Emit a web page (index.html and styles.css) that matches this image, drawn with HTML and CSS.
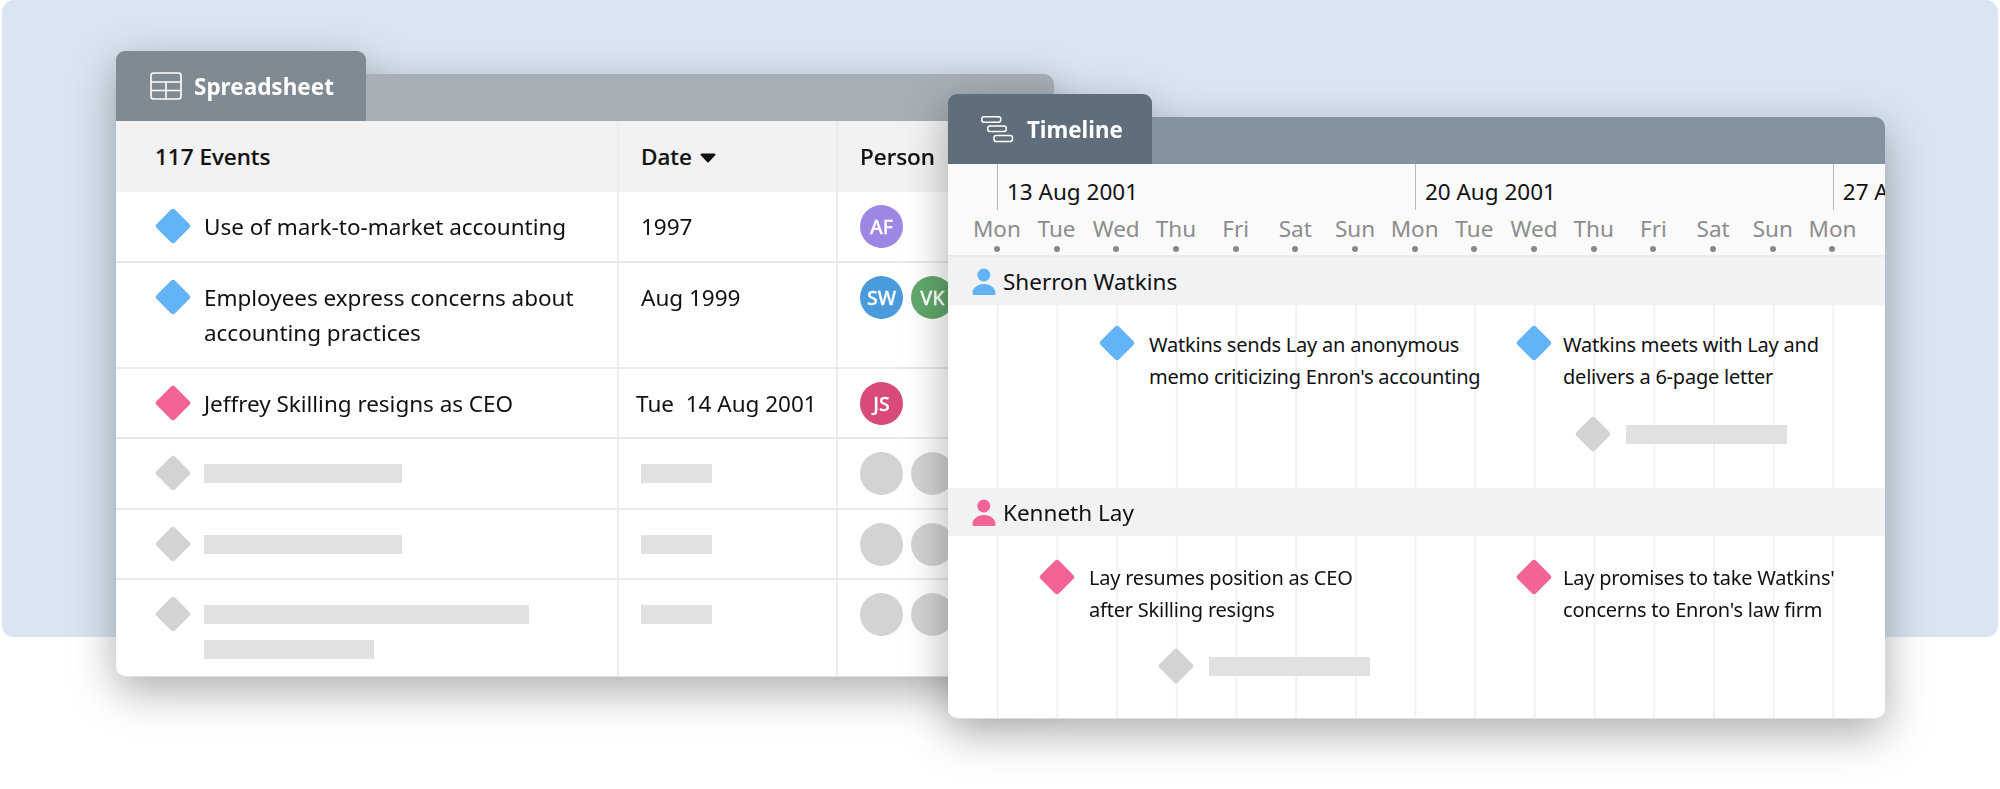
FILE: index.html
```html
<!DOCTYPE html>
<html lang="en">
<head>
<meta charset="utf-8">
<title>Spreadsheet and Timeline</title>
<link rel="stylesheet" href="styles.css">
</head>
<body>
<main class="stage">
  <div class="backdrop"></div>

  <section class="window sheet">
    <header class="titlebar sheet-bar">
      <div class="tab sheet-tab">
        <svg class="tab-icon" width="32" height="28" viewBox="0 0 32 28" fill="none" stroke="#fff" stroke-width="1.6"><rect x="1" y="1" width="30" height="26" rx="2.5"/><path d="M1 10h30M1 18.500h30M16 10v17"/></svg>
        <span>Spreadsheet</span>
      </div>
    </header>
    <div class="table">
      <div class="cell head first">117 Events</div>
      <div class="cell head">Date <svg class="caret" width="16" height="10" viewBox="0 0 16 10"><path d="M1.500 0.500h13a1 1 0 0 1 .7 1.700l-6.500 7a1 1 0 0 1-1.400 0l-6.500-7a1 1 0 0 1 .7-1.700z" fill="#111"/></svg></div>
      <div class="cell head person-head">Person</div>

      <div class="cell first"><i class="diamond blue"></i><span class="label">Use of mark-to-market accounting</span></div>
      <div class="cell">1997</div>
      <div class="cell people"><b class="avatar purple">AF</b></div>

      <div class="cell first"><i class="diamond blue"></i><span class="label">Employees express concerns about accounting practices</span></div>
      <div class="cell">Aug 1999</div>
      <div class="cell people"><b class="avatar azure">SW</b><b class="avatar green">VK</b></div>

      <div class="cell first"><i class="diamond pink"></i><span class="label">Jeffrey Skilling resigns as CEO</span></div>
      <div class="cell date-long">Tue&nbsp; 14 Aug 2001</div>
      <div class="cell people"><b class="avatar rose">JS</b></div>

      <div class="cell first"><i class="diamond grey"></i><div class="ghosts"><i class="ghost w198"></i></div></div>
      <div class="cell"><i class="ghost w71"></i></div>
      <div class="cell people"><b class="avatar blank"></b><b class="avatar blank"></b></div>

      <div class="cell first"><i class="diamond grey"></i><div class="ghosts"><i class="ghost w198"></i></div></div>
      <div class="cell"><i class="ghost w71"></i></div>
      <div class="cell people"><b class="avatar blank"></b><b class="avatar blank"></b></div>

      <div class="cell first tall"><i class="diamond grey"></i><div class="ghosts"><i class="ghost w325"></i><i class="ghost w170"></i></div></div>
      <div class="cell tall"><i class="ghost w71"></i></div>
      <div class="cell people tall"><b class="avatar blank"></b><b class="avatar blank"></b></div>
    </div>
  </section>

  <section class="window timeline">
    <header class="titlebar time-bar">
      <div class="tab time-tab">
        <svg class="tab-icon" width="33" height="28" viewBox="0 0 33 28" fill="none" stroke="#fff" stroke-width="1.5"><rect x="0.750" y="1.750" width="19" height="5.500" rx="2.200"/><rect x="6.750" y="11" width="18.500" height="5.500" rx="2.200"/><rect x="13" y="20.500" width="18.500" height="6" rx="2.200"/></svg>
        <span>Timeline</span>
      </div>
    </header>
    <div class="scale">
      <div class="weeks">
        <div class="week">13 Aug 2001</div>
        <div class="week">20 Aug 2001</div>
        <div class="week">27 Aug 2001</div>
      </div>
      <div class="days">
        <span class="day">Mon</span><span class="day">Tue</span><span class="day">Wed</span><span class="day">Thu</span><span class="day">Fri</span><span class="day">Sat</span><span class="day">Sun</span><span class="day">Mon</span><span class="day">Tue</span><span class="day">Wed</span><span class="day">Thu</span><span class="day">Fri</span><span class="day">Sat</span><span class="day">Sun</span><span class="day">Mon</span>
      </div>
    </div>

    <div class="lane-head">
      <svg class="person" width="24" height="28" viewBox="0 0 24 28"><circle cx="11.800" cy="8" r="6.500" fill="#62b4f7"/><path d="M.500 26C.500 21 5.500 17 12 17s11.500 4 11.500 9v.500a1.500 1.500 0 0 1-1.500 1.500H2a1.500 1.500 0 0 1-1.500-1.500z" fill="#62b4f7"/></svg>
      <span>Sherron Watkins</span>
    </div>
    <div class="lane lane-one">
      <div class="event e1"><i class="diamond blue"></i><p>Watkins sends Lay an anonymous<br>memo criticizing Enron's accounting</p></div>
      <div class="event e2"><i class="diamond blue"></i><p>Watkins meets with Lay and<br>delivers a 6-page letter</p></div>
      <div class="event e3"><i class="diamond grey"></i><i class="ghost w161"></i></div>
    </div>

    <div class="lane-head">
      <svg class="person" width="24" height="28" viewBox="0 0 24 28"><circle cx="11.800" cy="8" r="6.500" fill="#f46396"/><path d="M.500 26C.500 21 5.500 17 12 17s11.500 4 11.500 9v.500a1.500 1.500 0 0 1-1.500 1.500H2a1.500 1.500 0 0 1-1.500-1.500z" fill="#f46396"/></svg>
      <span>Kenneth Lay</span>
    </div>
    <div class="lane lane-two">
      <div class="event e4"><i class="diamond pink"></i><p>Lay resumes position as CEO<br>after Skilling resigns</p></div>
      <div class="event e5"><i class="diamond pink"></i><p>Lay promises to take Watkins'<br>concerns to Enron's law firm</p></div>
      <div class="event e6"><i class="diamond grey"></i><i class="ghost w161"></i></div>
    </div>
  </section>
</main>
</body>
</html>
```
FILE: styles.css
```css
* { box-sizing: border-box; }
html, body { margin: 0; padding: 0; background: #fff; }
body { font-family: "Noto Sans", "Open Sans", sans-serif; color: #111; overflow: hidden; }
i, b { display: block; font-style: normal; }

.stage { position: relative; width: 2000px; height: 789px; overflow: hidden; }
.backdrop { height: 637px; margin: 0 2px; background: #d9e5f1; border-radius: 12px; }

.window { position: absolute; filter: drop-shadow(0 14px 22px rgba(0, 0, 0, .32)); }
.sheet { left: 116px; top: 51px; width: 938px; }
.timeline { left: 948px; top: 94px; width: 937px; }

.titlebar { height: 70px; display: flex; align-items: flex-end; position: relative; }
.titlebar::before { content: ""; position: absolute; left: 0; right: 0; bottom: 0; height: 47px; border-radius: 0 10px 0 0; }
.sheet-bar::before { background: #a6aeb6; }
.time-bar::before { background: #84939f; }
.tab { position: relative; height: 70px; border-radius: 9px 9px 0 0; display: flex; align-items: center; color: #fff; font-size: 22.500px; font-weight: 700; }
.sheet-tab { width: 250px; background: #7f8a93; padding-left: 34px; gap: 12px; }
.time-tab { width: 204px; background: #5f6e7a; padding-left: 33px; gap: 13px; font-size: 22.300px; }
.tab-icon { flex: none; }

.table { display: grid; grid-template-columns: 503px 219px 216px; grid-template-rows: 71px 71px 106px 70px 71px 70px 96px; background: #fff; border-bottom: 1px solid #e0e0e0; border-radius: 0 0 10px 10px; overflow: hidden; font-size: 22.500px; }
.cell { border-right: 2px solid #ededed; border-bottom: 2px solid #e9e9e9; padding: 17px 0 0 22px; line-height: 35px; white-space: nowrap; }
.cell:nth-child(3n) { border-right: 0; padding-left: 22px; }
.cell.first { padding-left: 39px; display: flex; gap: 13px; align-items: flex-start; }
.cell.tall { border-bottom: 0; }
.head { background: #f2f2f2; font-weight: 500; -webkit-text-stroke: .2px #111; border-bottom: 0; display: flex; align-items: center; gap: 8px; padding-top: 0 !important; }
.cell.head.first { align-items: center; }
.date-long { padding-left: 17px; }
.label { white-space: normal; width: 400px; letter-spacing: -.03px; }
.caret { flex: none; margin-top: 3px; }

.diamond { flex: none; width: 26px; height: 26px; border-radius: 3px; transform: rotate(45deg); margin: 4px 5px; }
.blue { background: #62b4f7; }
.pink { background: #f46396; }
.grey { background: #d3d3d3; }

.people { display: flex; gap: 8px; padding-top: 13px; }
.avatar { width: 43px; height: 43px; flex: none; border-radius: 50%; color: #fff; font-size: 19.500px; font-weight: 500; -webkit-text-stroke: .3px #fff; line-height: 43px; text-align: center; }
.purple { background: #9e86e4; }
.azure { background: #4a9bdc; }
.green { background: #62a86b; }
.rose { background: #d84a78; }
.blank { background: #d3d3d3; }

.ghosts { display: flex; flex-direction: column; gap: 16px; padding-top: 8px; }
.cell > .ghost { margin-top: 8px; }
.ghost { height: 19px; background: #e1e1e2; }
.w198 { width: 198px; }
.w71 { width: 71px; }
.w325 { width: 325px; }
.w170 { width: 170px; }
.w161 { width: 161px; }

.scale { height: 93px; background: #fafafa; border-bottom: 2px solid #ebebeb; padding-left: 49px; overflow: hidden; }
.weeks { height: 46px; display: grid; grid-template-columns: repeat(3, 417.900px); }
.week { border-left: 1px solid #b5b8bb; padding-left: 9px; font-size: 22.500px; line-height: 55px; white-space: nowrap; overflow: hidden; }
.days { display: grid; grid-template-columns: repeat(15, 59.700px); margin-left: -30px; }
.day { position: relative; text-align: center; color: #8c8c8c; font-size: 22.500px; line-height: 38px; }
.day::after { content: ""; position: absolute; left: 50%; top: 36px; width: 6px; height: 6px; margin-left: -3px; border-radius: 50%; background: #888; }

.lane-head { height: 48px; background: #f1f2f4; display: flex; align-items: center; gap: 7px; font-size: 22.500px; padding-left: 24px; }
.person { flex: none; }
.lane { position: relative; background: #fff linear-gradient(90deg, #f2f2f2 0 1.500px, transparent 1.500px) -11px 0 / 59.700px 100% repeat-x; }
.lane-one { height: 183px; }
.lane-two { height: 183px; border-bottom: 1px solid #e0e0e0; border-radius: 0 0 10px 10px; }
.event { position: absolute; display: flex; align-items: flex-start; gap: 14px; }
.event p { margin: 0; padding-top: 5px; font-size: 20px; line-height: 32px; white-space: nowrap; letter-spacing: -.22px; }
.lane-two .event p { padding-top: 4px; line-height: 31.500px; }
.event .diamond { margin: 6px 5px 4px; }
.e1 { left: 151px; top: 19px; }
.e2 { left: 568px; top: 19px; gap: 11px; }
.e3 { left: 627px; top: 110px; gap: 15px; }
.e4 { left: 91px; top: 22px; }
.e5 { left: 568px; top: 22px; gap: 11px; }
.e6 { left: 210px; top: 111px; gap: 15px; }
.event > .ghost { margin-top: 10px; }
```
